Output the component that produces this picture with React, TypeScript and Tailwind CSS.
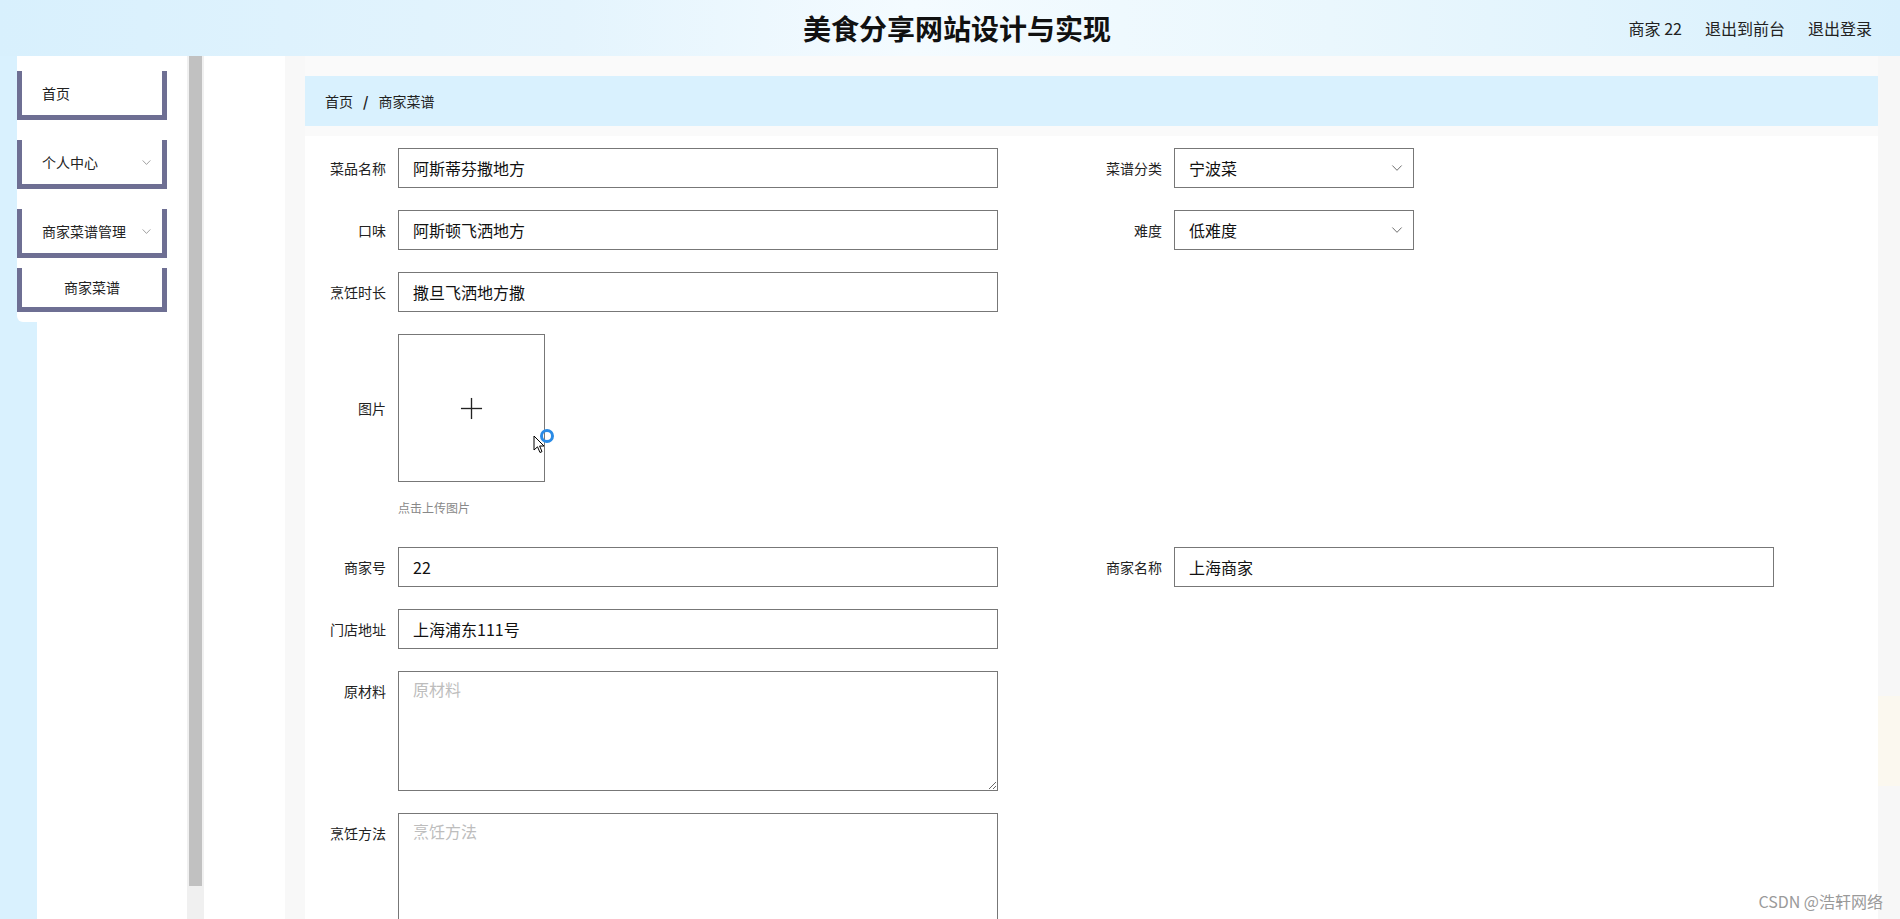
import type { ReactNode } from "react";

const menuBorder = "border-x-[5px] border-b-[5px] border-[#6e6f93]";

function Chevron({ className }: { className?: string }) {
  return (
    <svg viewBox="0 0 12 7" className={className} fill="none" stroke="currentColor" strokeWidth="1.1">
      <polyline points="0.6,0.6 6,6.2 11.4,0.6" />
    </svg>
  );
}

function MenuItem({ label, arrow, sub }: { label: string; arrow?: boolean; sub?: boolean }) {
  if (sub) {
    return (
      <div className={`flex h-[44px] w-[150px] items-center justify-center text-[14px] text-[#222] ${menuBorder}`}>
        {label}
      </div>
    );
  }
  return (
    <div className={`flex h-[49px] w-[150px] items-center justify-between pl-[20px] pr-[11px] text-[14px] text-[#222] ${menuBorder}`}>
      <span>{label}</span>
      {arrow && <Chevron className="h-[5px] w-[9px] text-[#888]" />}
    </div>
  );
}

function FormItem({ label, children, tall }: { label: string; children: ReactNode; tall?: boolean }) {
  return (
    <div className="flex">
      <label
        className={`w-[80px] shrink-0 pr-[12px] text-right text-[14px] text-[#222] ${
          tall ? "flex h-[148px] items-center justify-end" : "leading-[40px]"
        }`}
      >
        {label}
      </label>
      {children}
    </div>
  );
}

function TextInput({ value }: { value: string }) {
  return (
    <input
      readOnly
      defaultValue={value}
      className="h-[40px] w-[600px] border border-[#777] bg-white px-[14px] text-[16px] text-[#111] outline-none"
    />
  );
}

function SelectBox({ value }: { value: string }) {
  return (
    <div className="flex h-[40px] w-[240px] items-center justify-between border border-[#777] bg-white pl-[14px] pr-[10px] text-[16px] text-[#111]">
      <span>{value}</span>
      <Chevron className="h-[6px] w-[12px] text-[#666]" />
    </div>
  );
}

function TextArea({ placeholder }: { placeholder: string }) {
  return (
    <textarea
      placeholder={placeholder}
      className="h-[120px] w-[600px] resize-y border border-[#777] bg-white px-[14px] pt-[5px] text-[16px] leading-[24px] text-[#111] outline-none placeholder:text-[#bdbdbd]"
    />
  );
}

export default function App() {
  return (
    <div className="relative h-[919px] w-[1900px] overflow-hidden bg-white font-['Noto_Sans_CJK_SC','Noto_Sans',sans-serif]">
      {/* top bar */}
      <header className="grid h-[56px] grid-cols-[1fr_auto_1fr] items-center bg-[linear-gradient(90deg,#d8f0fd_0%,#e4f4fd_30%,#f4fbff_48%,#eaf7fd_70%,#d8f0fd_100%)]">
        <div />
        <h1 className="ml-[14px] text-[28px] font-bold leading-none text-[#111]">美食分享网站设计与实现</h1>
        <nav className="flex items-center justify-end gap-[23px] pr-[28px] text-[16px] text-[#222]">
          <span>商家 22</span>
          <span>退出到前台</span>
          <span>退出登录</span>
        </nav>
      </header>

      <div className="flex h-[863px]">
        {/* side menu */}
        <aside className="w-[187px] shrink-0 bg-[linear-gradient(90deg,#d9f1fe_37px,#ffffff_37px)]">
          <div className="ml-[17px] flex w-[170px] flex-col gap-[20px] rounded-bl-[6px] bg-white pb-[10px] pt-[15px]">
            <MenuItem label="首页" />
            <MenuItem label="个人中心" arrow />
            <div className="flex flex-col gap-[10px]">
              <MenuItem label="商家菜谱管理" arrow />
              <MenuItem label="商家菜谱" sub />
            </div>
          </div>
        </aside>

        {/* scrollbar */}
        <div className="w-[17px] shrink-0 bg-[#f0f0f0] px-[2px]">
          <div className="h-[830px] w-[13px] bg-[#c1c1c1]" />
        </div>

        {/* content */}
        <main className="flex flex-1">
          <div className="w-[81px] shrink-0 bg-white" />
          <div className="w-[20px] shrink-0 bg-[#f8f8f8]" />
          <section className="w-[1573px] shrink-0 bg-[#fafafa] pt-[20px]">
            <div className="flex h-[50px] items-center bg-[#d9f1fe] px-[20px] text-[14px] text-[#222]">
              <span>首页</span>
              <span className="mx-[10px] font-bold">/</span>
              <span>商家菜谱</span>
            </div>

            <form className="mt-[10px] h-[800px] bg-white pl-[13px] pt-[12px]">
              <div className="mb-[22px] grid grid-cols-[776px_1fr]">
                <FormItem label="菜品名称">
                  <TextInput value="阿斯蒂芬撒地方" />
                </FormItem>
                <FormItem label="菜谱分类">
                  <SelectBox value="宁波菜" />
                </FormItem>
              </div>
              <div className="mb-[22px] grid grid-cols-[776px_1fr]">
                <FormItem label="口味">
                  <TextInput value="阿斯顿飞洒地方" />
                </FormItem>
                <FormItem label="难度">
                  <SelectBox value="低难度" />
                </FormItem>
              </div>
              <div className="mb-[22px]">
                <FormItem label="烹饪时长">
                  <TextInput value="撒旦飞洒地方撒" />
                </FormItem>
              </div>
              <div className="mb-[31px]">
                <FormItem label="图片" tall>
                  <div>
                    <div className="relative flex h-[148px] w-[147px] items-center justify-center border border-[#777] bg-white">
                      <svg viewBox="0 0 24 24" className="h-[23px] w-[23px] text-[#222]" fill="none" stroke="currentColor" strokeWidth="1.4">
                        <line x1="12" y1="1" x2="12" y2="23" />
                        <line x1="1" y1="12" x2="23" y2="12" />
                      </svg>
                      {/* busy cursor */}
                      <svg viewBox="0 0 12 19" className="absolute left-[134px] top-[100px] h-[19px] w-[12px]">
                        <path d="M1 1 L1 15 L4.5 11.8 L7 17.5 L9 16.6 L6.6 11 L11 11 Z" fill="#fff" stroke="#000" strokeWidth="1" strokeLinejoin="round" />
                      </svg>
                      <span className="absolute left-[141px] top-[94px] h-[14px] w-[14px] rounded-full border-[3px] border-[#2a8be6]" />
                    </div>
                    <div className="mt-[18px] text-[12px] leading-[16px] text-[#888]">点击上传图片</div>
                  </div>
                </FormItem>
              </div>
              <div className="mb-[22px] grid grid-cols-[776px_1fr]">
                <FormItem label="商家号">
                  <TextInput value="22" />
                </FormItem>
                <FormItem label="商家名称">
                  <TextInput value="上海商家" />
                </FormItem>
              </div>
              <div className="mb-[22px]">
                <FormItem label="门店地址">
                  <TextInput value="上海浦东111号" />
                </FormItem>
              </div>
              <div className="mb-[22px] flex">
                <FormItem label="原材料">
                  <TextArea placeholder="原材料" />
                </FormItem>
              </div>
              <div className="flex">
                <FormItem label="烹饪方法">
                  <TextArea placeholder="烹饪方法" />
                </FormItem>
              </div>
            </form>
          </section>
          <div className="flex flex-1 flex-col bg-[#f7f7f7]">
            <div className="mt-[640px] h-[90px] bg-[#fbf8ef]" />
          </div>
        </main>
      </div>

      <div className="absolute bottom-[9px] right-[17px] text-[16px] leading-[18px] text-[#9a9a9a]">CSDN @浩轩网络</div>
    </div>
  );
}
